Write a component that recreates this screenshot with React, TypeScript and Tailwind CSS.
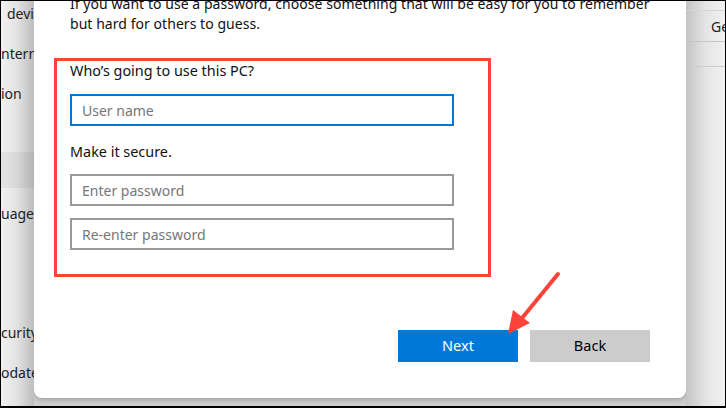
import React from "react";

const font = { fontFamily: '"Noto Sans", "Open Sans", sans-serif' };

export default function App() {
  return (
    <div
      className="relative w-[726px] h-[408px] overflow-hidden border-t border-l border-r border-b-2 border-black bg-[#c9c9c9] flex"
      style={font}
    >
      {/* left strip: settings nav behind the dialog */}
      <div className="relative w-[33px] h-full shrink-0 overflow-hidden bg-gradient-to-r from-[#f1f1f1] via-[#e2e2e2] to-[#bdbdbd] text-[14px] text-[#1c1c1c] leading-[20px] whitespace-nowrap flex flex-col">
        <div className="mt-[3px] pl-[6px]">devices</div>
        <div className="mt-[20px]">nternet</div>
        <div className="mt-[20px]">ion</div>
        <div className="mt-[48px] h-[36px] bg-black/[0.05]"></div>
        <div className="mt-[16px]">uage</div>
        <div className="mt-[99px]">curity</div>
        <div className="mt-[20px]">odate</div>
      </div>

      {/* middle column */}
      <div className="w-[652px] h-full shrink-0 flex flex-col bg-gradient-to-b from-[#b4b4b4] to-[#d0d0d0]">
        <div className="h-[397px] shrink-0 bg-white rounded-b-[8px] overflow-hidden shadow-[0_1px_6px_rgba(0,0,0,0.3)] flex flex-col pl-[36px] pr-[36px]">
          <p className="mt-[-7px] text-[14px] tracking-[0.05px] leading-[20px] text-[#111] whitespace-nowrap">
            If you want to use a password, choose something that will be easy for you to remember
            <br />
            but hard for others to guess.
          </p>

          <div className="mt-[24px] ml-[-16px] w-[437px] border-[3px] border-[#fd4239] pl-[13px] pt-[0px] pb-[24px] flex flex-col">
            <div className="h-[21px] text-[14.4px] leading-[20px] text-[#111]">Who’s going to use this PC?</div>
            <div className="mt-[12px] w-[384px] h-[32px] border-2 border-[#0078d7] flex items-center pl-[10px] text-[14px] text-[#777]">
              User name
            </div>
            <div className="mt-[16px] h-[21px] text-[14.4px] leading-[20px] text-[#111]">Make it secure.</div>
            <div className="mt-[11px] w-[384px] h-[32px] border-2 border-[#999] flex items-center pl-[10px] text-[14px] text-[#777]">
              Enter password
            </div>
            <div className="mt-[12px] w-[384px] h-[32px] border-2 border-[#999] flex items-center pl-[10px] text-[14px] text-[#777]">
              Re-enter password
            </div>
          </div>

          <div className="mt-[53px] flex justify-end gap-[12px]">
            <div className="w-[120px] h-[32px] bg-[#0078d7] text-white text-[14.5px] flex items-center justify-center">
              Next
            </div>
            <div className="w-[120px] h-[32px] bg-[#cccccc] text-black text-[14.5px] flex items-center justify-center">
              Back
            </div>
          </div>
        </div>
      </div>

      {/* right strip */}
      <div className="relative flex-1 h-full overflow-hidden bg-gradient-to-r from-[#c4c4c4] via-[#e4e4e4] to-[#f2f2f2] flex flex-col text-[14px] text-[#1c1c1c] whitespace-nowrap">
        <div className="mt-[9px] h-px bg-[#d6d6d6]"></div>
        <div className="h-[30px] flex items-center pl-[25px]">General</div>
        <div className="h-px bg-[#c6c6c6]"></div>
        <div className="mt-[24px] h-px bg-[#cdcdcd]"></div>
      </div>

      {/* annotation arrow */}
      <svg className="absolute inset-0 pointer-events-none" width="726" height="408" viewBox="0 0 726 408">
        <line x1="557" y1="273" x2="517" y2="322" stroke="#fd4239" strokeWidth="4" strokeLinecap="round" />
        <polygon points="507,333 512,309 529,322" fill="#fd4239" />
      </svg>
    </div>
  );
}
